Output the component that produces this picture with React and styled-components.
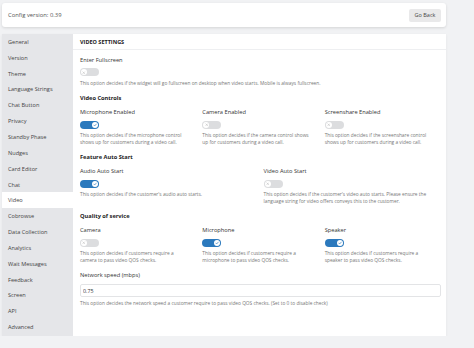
import React from 'react';
import styled, { createGlobalStyle } from 'styled-components';

const GlobalStyle = createGlobalStyle`
  body {
    margin: 0;
    background: #f1f2f4;
    font-family: 'Open Sans', 'Noto Sans', sans-serif;
    color: #333;
  }
`;

const menu = [
  'General', 'Version', 'Theme', 'Language Strings', 'Chat Button', 'Privacy',
  'Standby Phase', 'Nudges', 'Card Editor', 'Chat', 'Video', 'Cobrowse',
  'Data Collection', 'Analytics', 'Wait Messages', 'Feedback', 'Screen', 'API', 'Advanced',
];

const Toggle = ({ on }) => (
  <ToggleTrack on={on ? 1 : 0}>
    <Knob>
      {on ? (
        <svg width='4' height='4' viewBox='0 0 10 10'>
          <path d='M2 5.2 L4.2 7.4 L8.2 2.8' fill='none' stroke='#2b79bd' strokeWidth='1.6' strokeLinecap='round' strokeLinejoin='round' />
        </svg>
      ) : (
        <svg width='3.5' height='3.5' viewBox='0 0 10 10'>
          <path d='M2.5 2.5 L7.5 7.5 M7.5 2.5 L2.5 7.5' fill='none' stroke='#b9b9b9' strokeWidth='1.5' strokeLinecap='round' />
        </svg>
      )}
    </Knob>
  </ToggleTrack>
);

const Field = ({ label, on, desc }) => (
  <FieldBox>
    <Label>{label}</Label>
    <Toggle on={on} />
    <Desc>{desc}</Desc>
  </FieldBox>
);

const App = () => (
  <Page>
    <GlobalStyle />
    <Header>
      <span>Config version: 0.39</span>
      <BackButton>Go Back</BackButton>
    </Header>
    <Main>
      <Sidebar>
        {menu.map((m) => (
          <MenuItem key={m} active={m === 'Video' ? 1 : 0}>{m}</MenuItem>
        ))}
      </Sidebar>
      <Content>
        <PanelTitle>VIDEO SETTINGS</PanelTitle>
        <Body>
          <Field
            label='Enter Fullscreen'
            on={false}
            desc='This option decides if the widget will go fullscreen on desktop when video starts. Mobile is always fullscreen.'
          />
          <Heading>Video Controls</Heading>
          <Row cols={3}>
            <Field
              label='Microphone Enabled'
              on
              desc='This option decides if the microphone control shows up for customers during a video call.'
            />
            <Field
              label='Camera Enabled'
              on={false}
              desc='This option decides if the camera control shows up for customers during a video call.'
            />
            <Field
              label='Screenshare Enabled'
              on={false}
              desc='This option decides if the screenshare control shows up for customers during a video call.'
            />
          </Row>
          <Heading>Feature Auto Start</Heading>
          <Row cols={2}>
            <Field
              label='Audio Auto Start'
              on
              desc="This option decides if the customer's audio auto starts."
            />
            <Field
              label='Video Auto Start'
              on={false}
              desc="This option decides if the customer's video auto starts. Please ensure the language string for video offers conveys this to the customer."
            />
          </Row>
          <Heading>Quality of service</Heading>
          <Row cols={3} spaced>
            <Field
              label='Camera'
              on={false}
              desc='This option decides if customers require a camera to pass video QOS checks.'
            />
            <Field
              label='Microphone'
              on
              desc='This option decides if customers require a microphone to pass video QOS checks.'
            />
            <Field
              label='Speaker'
              on
              desc='This option decides if customers require a speaker to pass video QOS checks.'
            />
          </Row>
          <FieldBox>
            <Label>Network speed (mbps)</Label>
            <Input defaultValue='0.75' />
            <Desc>This option decides the network speed a customer require to pass video QOS checks. (Set to 0 to disable check)</Desc>
          </FieldBox>
        </Body>
      </Content>
    </Main>
  </Page>
);

const Page = styled.div`
  width: 444px;
  padding: 3px 0 0 2px;
`;

const Header = styled.div`
  height: 24px;
  background: #fff;
  border-radius: 3px;
  box-shadow: 0 1px 3px rgba(0, 0, 0, 0.12);
  display: flex;
  align-items: center;
  justify-content: space-between;
  padding: 0 5px 0 6px;
  font-size: 5.85px;
  color: #555;
`;

const BackButton = styled.button`
  border: none;
  background: #e9e9ea;
  color: #444;
  font-family: inherit;
  font-size: 5.5px;
  height: 13px;
  width: 32px;
  padding: 0;
  border-radius: 2px;
`;

const Main = styled.div`
  margin-top: 7px;
  display: flex;
  height: 302px;
  box-shadow: 0 1px 3px rgba(0, 0, 0, 0.06);
`;

const Sidebar = styled.div`
  width: 71px;
  background: #e5e6e9;
  display: flex;
  flex-direction: column;
`;

const MenuItem = styled.div`
  height: 15.85px;
  display: flex;
  align-items: center;
  padding-left: 6px;
  font-size: 5.6px;
  color: #444;
  background: ${(p) => (p.active ? '#fff' : 'transparent')};
`;

const Content = styled.div`
  flex: 1;
  background: #fff;
`;

const PanelTitle = styled.div`
  height: 15px;
  display: flex;
  align-items: center;
  padding-left: 7px;
  font-size: 5.5px;
  font-weight: 700;
  color: #222;
  border-bottom: 1px solid #eeeff1;
`;

const Body = styled.div`
  display: flex;
  flex-direction: column;
  padding: 5.5px 5px 0 7px;
`;

const Row = styled.div`
  display: grid;
  grid-template-columns: repeat(${(p) => p.cols}, 1fr);
  column-gap: 6px;
  margin-bottom: ${(p) => (p.spaced ? '2px' : '0')};
`;

const FieldBox = styled.div`
  margin-bottom: 6.2px;
`;

const Label = styled.div`
  font-size: 5.7px;
  line-height: 9px;
  color: #333;
`;

const Heading = styled.div`
  font-size: 5.7px;
  line-height: 9px;
  font-weight: 700;
  color: #222;
  margin: 1px 0 5.2px;
`;

const ToggleTrack = styled.div`
  width: 19px;
  height: 8px;
  margin: 3.8px 0 3.4px;
  border-radius: 4px;
  background: ${(p) => (p.on ? '#2b79bd' : '#dcdddf')};
  display: flex;
  align-items: center;
  justify-content: ${(p) => (p.on ? 'flex-end' : 'flex-start')};
  padding: 0 1px;
  box-sizing: border-box;
`;

const Knob = styled.div`
  width: 6px;
  height: 6px;
  border-radius: 50%;
  background: #fff;
  display: flex;
  align-items: center;
  justify-content: center;
`;

const Desc = styled.div`
  font-size: 4.8px;
  line-height: 6.7px;
  color: #777;
  padding-right: 8px;
`;

const Input = styled.input`
  display: block;
  box-sizing: border-box;
  width: 100%;
  height: 13px;
  margin: 4px 0 2.7px;
  border: 1px solid #e3e4e6;
  border-radius: 2px;
  padding: 0 2px;
  font-family: inherit;
  font-size: 5.3px;
  color: #333;
  outline: none;
`;

export default App;
